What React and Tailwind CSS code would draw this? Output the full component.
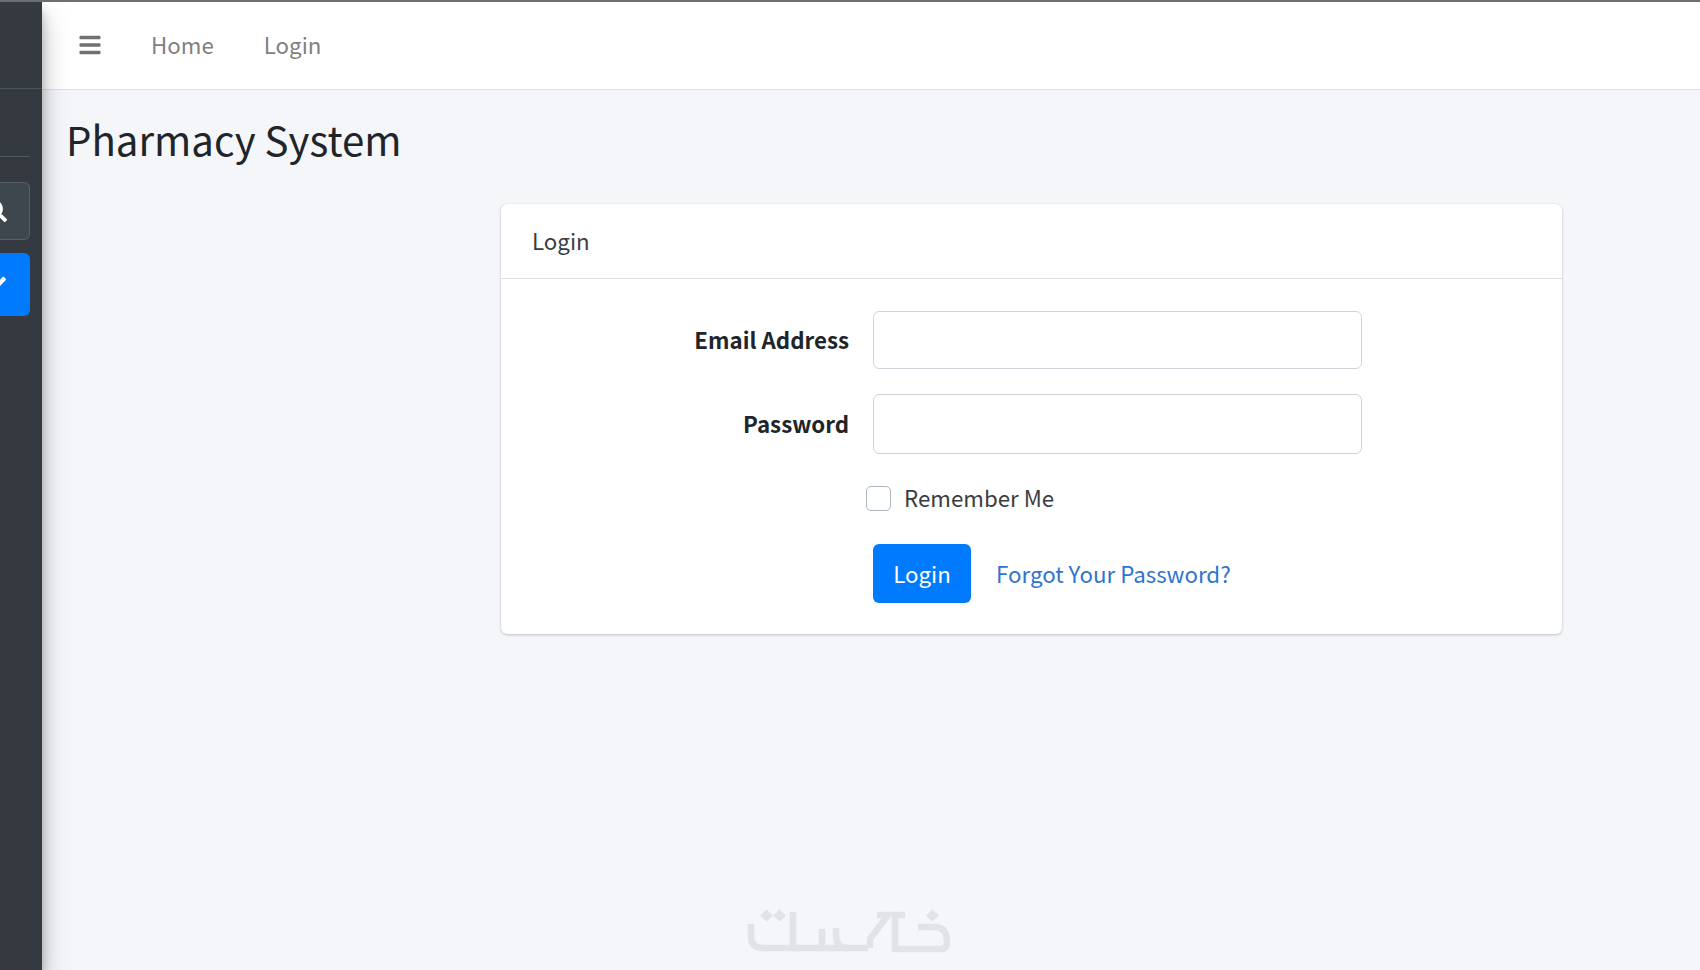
import React from 'react';
import { FaSearch, FaCheck, FaBars } from 'react-icons/fa';

const fontStack = 'font-["Noto_Sans_CJK_SC","Noto_Sans",sans-serif]';

// Logo watermark, coordinates are page px minus (740, 900)
const Watermark = () => (
  <svg className="absolute left-[740px] top-[900px]" width="220" height="60" viewBox="0 0 220 60" fill="none">
    <g stroke="#e1e3e6" strokeWidth="6.5" strokeLinejoin="miter">
      <path d="M11 22v12q0 12 12 12h105" />
      <path d="M53 10v36" />
      <path d="M82 27v19" />
      <path d="M96 26v8q0 12 12 12" />
      <path d="M137 13h11l-18 24v9" />
      <path d="M155 10v40" />
      <path d="M152 13h13" />
      <path d="M155 47h46q6 0 6-8 0-14-13-14h-16" />
    </g>
    <g fill="#e1e3e6">
      <rect x="22" y="9" width="9" height="9" transform="rotate(45 26.5 13.5)" />
      <rect x="35" y="9" width="9" height="9" transform="rotate(45 39.5 13.5)" />
      <rect x="188" y="9" width="9" height="9" transform="rotate(45 192.5 13.5)" />
    </g>
  </svg>
);

export default function App() {
  return (
    <div className={`relative flex h-screen overflow-hidden bg-[#f4f6f9] border-t-2 border-[#6b6e72] ${fontStack}`}>
      {/* Sidebar, pushed mostly off the left edge */}
      <aside className="z-10 w-[42px] shrink-0 bg-[#343a40] shadow-[0_14px_28px_rgba(0,0,0,0.25),0_10px_10px_rgba(0,0,0,0.22)]">
        <div className="h-[87px] border-b border-[#4b545c]" />
        <div className="h-[68px] border-b border-[#4f5962] mr-3" />
        <div className="mt-[25px] mr-3 h-[58px] flex items-center rounded-r-md border border-l-0 border-[#56606a] bg-[#3f474e] overflow-hidden">
          <FaSearch className="text-white text-[22px] shrink-0 -ml-[15px]" />
        </div>
        <div className="mt-[13px] mr-3 h-[63px] flex items-center rounded-r-md bg-[#007bff] overflow-hidden">
          <FaCheck className="text-white text-[22px] shrink-0 -ml-[16px]" />
        </div>
      </aside>

      <div className="flex-1 flex flex-col min-w-0">
        {/* Top nav */}
        <nav className="h-[88px] shrink-0 flex items-center bg-white border-b border-[#dee2e6] pl-[36px] text-[22.3px] text-[#7f7f7f]">
          <FaBars className="text-[24px] text-[#6f7072] -mt-[2px]" />
          <a className="ml-[49px] -mt-[2px]">Home</a>
          <a className="ml-[50px] -mt-[2px]">Login</a>
        </nav>

        {/* Content */}
        <main className="flex-1 flex flex-col">
          <h1 className="mt-[23px] ml-[24px] text-[40.2px] leading-[52px] text-[#212529]">Pharmacy System</h1>

          <div className="mt-[39px] ml-[459px] w-[1061px] h-[430px] rounded-md bg-white shadow-[0_0_1px_rgba(0,0,0,0.125),0_1px_3px_rgba(0,0,0,0.2)]">
            <div className="h-[75px] flex items-center px-[31px] border-b border-[#dfdfdf] text-[22.3px] text-[#3a3d40]">Login</div>
            <form className="pt-8 flex flex-col text-[22.3px] text-[#212529]">
              <div className="flex items-center h-[58px]">
                <label className="w-[348px] text-right font-bold">Email Address</label>
                <input className="ml-6 w-[489px] h-[58px] rounded-md border border-[#ced4da] bg-white" />
              </div>
              <div className="mt-[25px] flex items-center h-[60px]">
                <label className="w-[348px] text-right font-bold">Password</label>
                <input className="ml-6 w-[489px] h-[60px] rounded-md border border-[#ced4da] bg-white" />
              </div>
              <div className="mt-[29px] flex items-center h-[30px] pl-[365px]">
                <span className="w-[25px] h-[25px] rounded-[5px] border border-[#adb5bd] bg-white" />
                <label className="ml-[13px] text-[#3a3d40]">Remember Me</label>
              </div>
              <div className="mt-[31px] flex items-center pl-[372px]">
                <button type="button" className="w-[98px] h-[59px] rounded-md bg-[#007bff] text-white">Login</button>
                <a className="ml-[25px] text-[#2f74d0]">Forgot Your Password?</a>
              </div>
            </form>
          </div>
        </main>
      </div>

      <Watermark />
    </div>
  );
}
